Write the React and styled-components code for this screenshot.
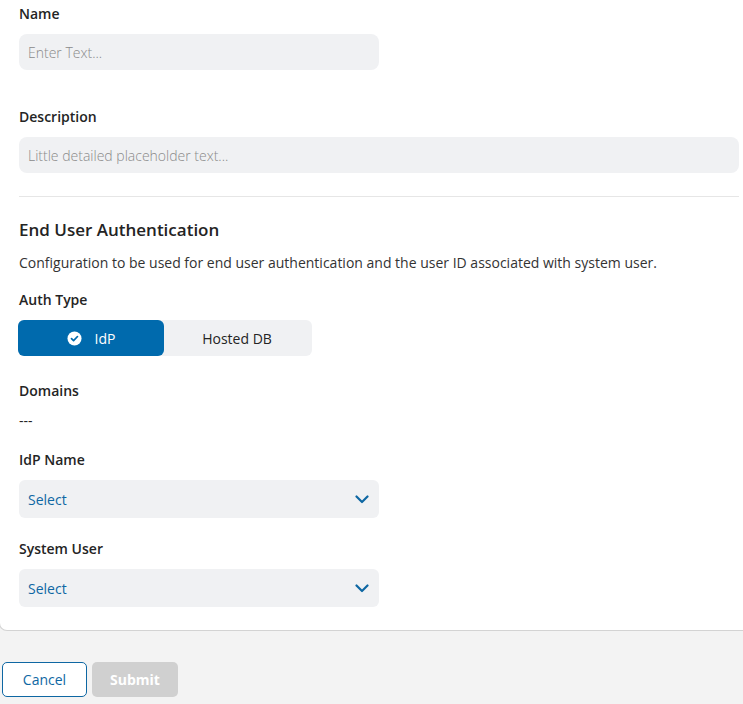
import React, { useState } from 'react';
import styled, { createGlobalStyle } from 'styled-components';

// 페이지 기본 스타일
const GlobalStyle = createGlobalStyle`
  html, body {
    margin: 0;
    padding: 0;
    background: #f3f3f3;
    overflow: hidden;
    font-family: "Open Sans", "Noto Sans", "Liberation Sans", sans-serif;
    color: #242424;
  }
`;

const CheckCircle = () => (
  <svg width="15" height="15" viewBox="0 0 16 16">
    <circle cx="8" cy="8" r="7.5" fill="#fff" />
    <path d="M4.8 8.2 L7 10.3 L11.2 5.9" fill="none" stroke="#006aad" strokeWidth="1.8" strokeLinecap="round" strokeLinejoin="round" />
  </svg>
);

const Chevron = () => (
  <svg width="14" height="9" viewBox="0 0 14 9">
    <path d="M1.5 1.5 L7 7 L12.5 1.5" fill="none" stroke="#0e67a3" strokeWidth="2.2" strokeLinecap="round" strokeLinejoin="round" />
  </svg>
);

const App = () => {
  const [authType, setAuthType] = useState('idp');

  return (
    <>
      <GlobalStyle />
      <Page>
        <Card>
          <Field $gap={37}>
            <Label>Name</Label>
            <TextInput $width="360px" placeholder="Enter Text..." />
          </Field>

          <Field $gap={23}>
            <Label>Description</Label>
            <TextInput placeholder="Little detailed placeholder text..." />
          </Field>

          <Divider />

          <Heading>End User Authentication</Heading>
          <Help>Configuration to be used for end user authentication and the user ID associated with system user.</Help>

          <Field $gap={25}>
            <Label>Auth Type</Label>
            <Segmented>
              <Segment $active={authType === 'idp'} onClick={() => setAuthType('idp')}>
                {authType === 'idp' && <CheckCircle />}
                IdP
              </Segment>
              <Segment $active={authType === 'db'} onClick={() => setAuthType('db')}>
                {authType === 'db' && <CheckCircle />}
                Hosted DB
              </Segment>
            </Segmented>
          </Field>

          <Field $gap={19}>
            <Label>Domains</Label>
            <Value>---</Value>
          </Field>

          <Field $gap={21}>
            <Label>IdP Name</Label>
            <Select>
              <span>Select</span>
              <Chevron />
            </Select>
          </Field>

          <Field $gap={0}>
            <Label>System User</Label>
            <Select>
              <span>Select</span>
              <Chevron />
            </Select>
          </Field>
        </Card>

        <Actions>
          <OutlineButton>Cancel</OutlineButton>
          <SolidButton disabled>Submit</SolidButton>
        </Actions>
      </Page>
    </>
  );
};

const Page = styled.div`
  min-height: 704px;
`;

// 흰색 카드 (위쪽은 스크롤되어 잘린 상태)
const Card = styled.div`
  background: #fff;
  margin: 0 -24px 0 -1px;
  padding: 4px 27px 23px 19px;
  border: 1px solid #d3d3d3;
  border-top: none;
  border-radius: 0 0 8px 8px;
`;

const Field = styled.div`
  display: flex;
  flex-direction: column;
  gap: 10px;
  margin-bottom: ${p => p.$gap}px;
`;

const Label = styled.div`
  font-size: 14px;
  line-height: 20px;
  font-weight: 600;
  color: #242424;
`;

const TextInput = styled.input`
  box-sizing: border-box;
  width: ${p => p.$width || '100%'};
  height: 36px;
  border: none;
  border-radius: 8px;
  background: #f0f1f3;
  padding: 0 9px;
  font-family: inherit;
  font-size: 14px;
  font-weight: 300;
  color: #242424;
  outline: none;

  &::placeholder {
    color: #8a8a8a;
  }
`;

const Divider = styled.hr`
  border: none;
  border-top: 1px solid #e6e6e6;
  margin: 0 0 21px;
`;

const Heading = styled.h2`
  margin: 0;
  font-size: 17px;
  line-height: 24px;
  font-weight: 600;
  color: #242424;
`;

const Help = styled.p`
  margin: 11px 0 17px;
  font-size: 14px;
  line-height: 20px;
  color: #333;
`;

const Segmented = styled.div`
  display: flex;
  width: 294px;
  height: 36px;
  margin-left: -1px;
  background: #f0f1f3;
  border-radius: 6px;
`;

const Segment = styled.button`
  flex: 0 0 146px;
  display: flex;
  align-items: center;
  justify-content: center;
  gap: 13px;
  border: none;
  border-radius: 6px;
  cursor: pointer;
  font-family: inherit;
  font-size: 14px;
  background: ${p => (p.$active ? '#006aad' : 'transparent')};
  color: ${p => (p.$active ? '#fff' : '#242424')};
`;

const Value = styled.div`
  font-size: 14px;
  line-height: 20px;
  color: #242424;
`;

const Select = styled.div`
  box-sizing: border-box;
  width: 360px;
  height: 38px;
  display: flex;
  align-items: center;
  justify-content: space-between;
  padding: 0 10px 0 9px;
  background: #f0f1f3;
  border-radius: 6px;
  font-size: 14px;
  color: #0e67a3;
  cursor: pointer;
`;

const Actions = styled.div`
  display: flex;
  gap: 5px;
  padding: 31px 0 0 2px;
`;

const OutlineButton = styled.button`
  box-sizing: border-box;
  width: 85px;
  height: 35px;
  border: 1px solid #0e67a3;
  border-radius: 5px;
  background: #fff;
  color: #0e67a3;
  font-family: inherit;
  font-size: 14px;
  cursor: pointer;
`;

const SolidButton = styled.button`
  box-sizing: border-box;
  width: 86px;
  height: 35px;
  border: none;
  border-radius: 5px;
  background: #d0d0d0;
  color: #fff;
  font-family: inherit;
  font-size: 14px;
  font-weight: 700;
`;

export default App;
